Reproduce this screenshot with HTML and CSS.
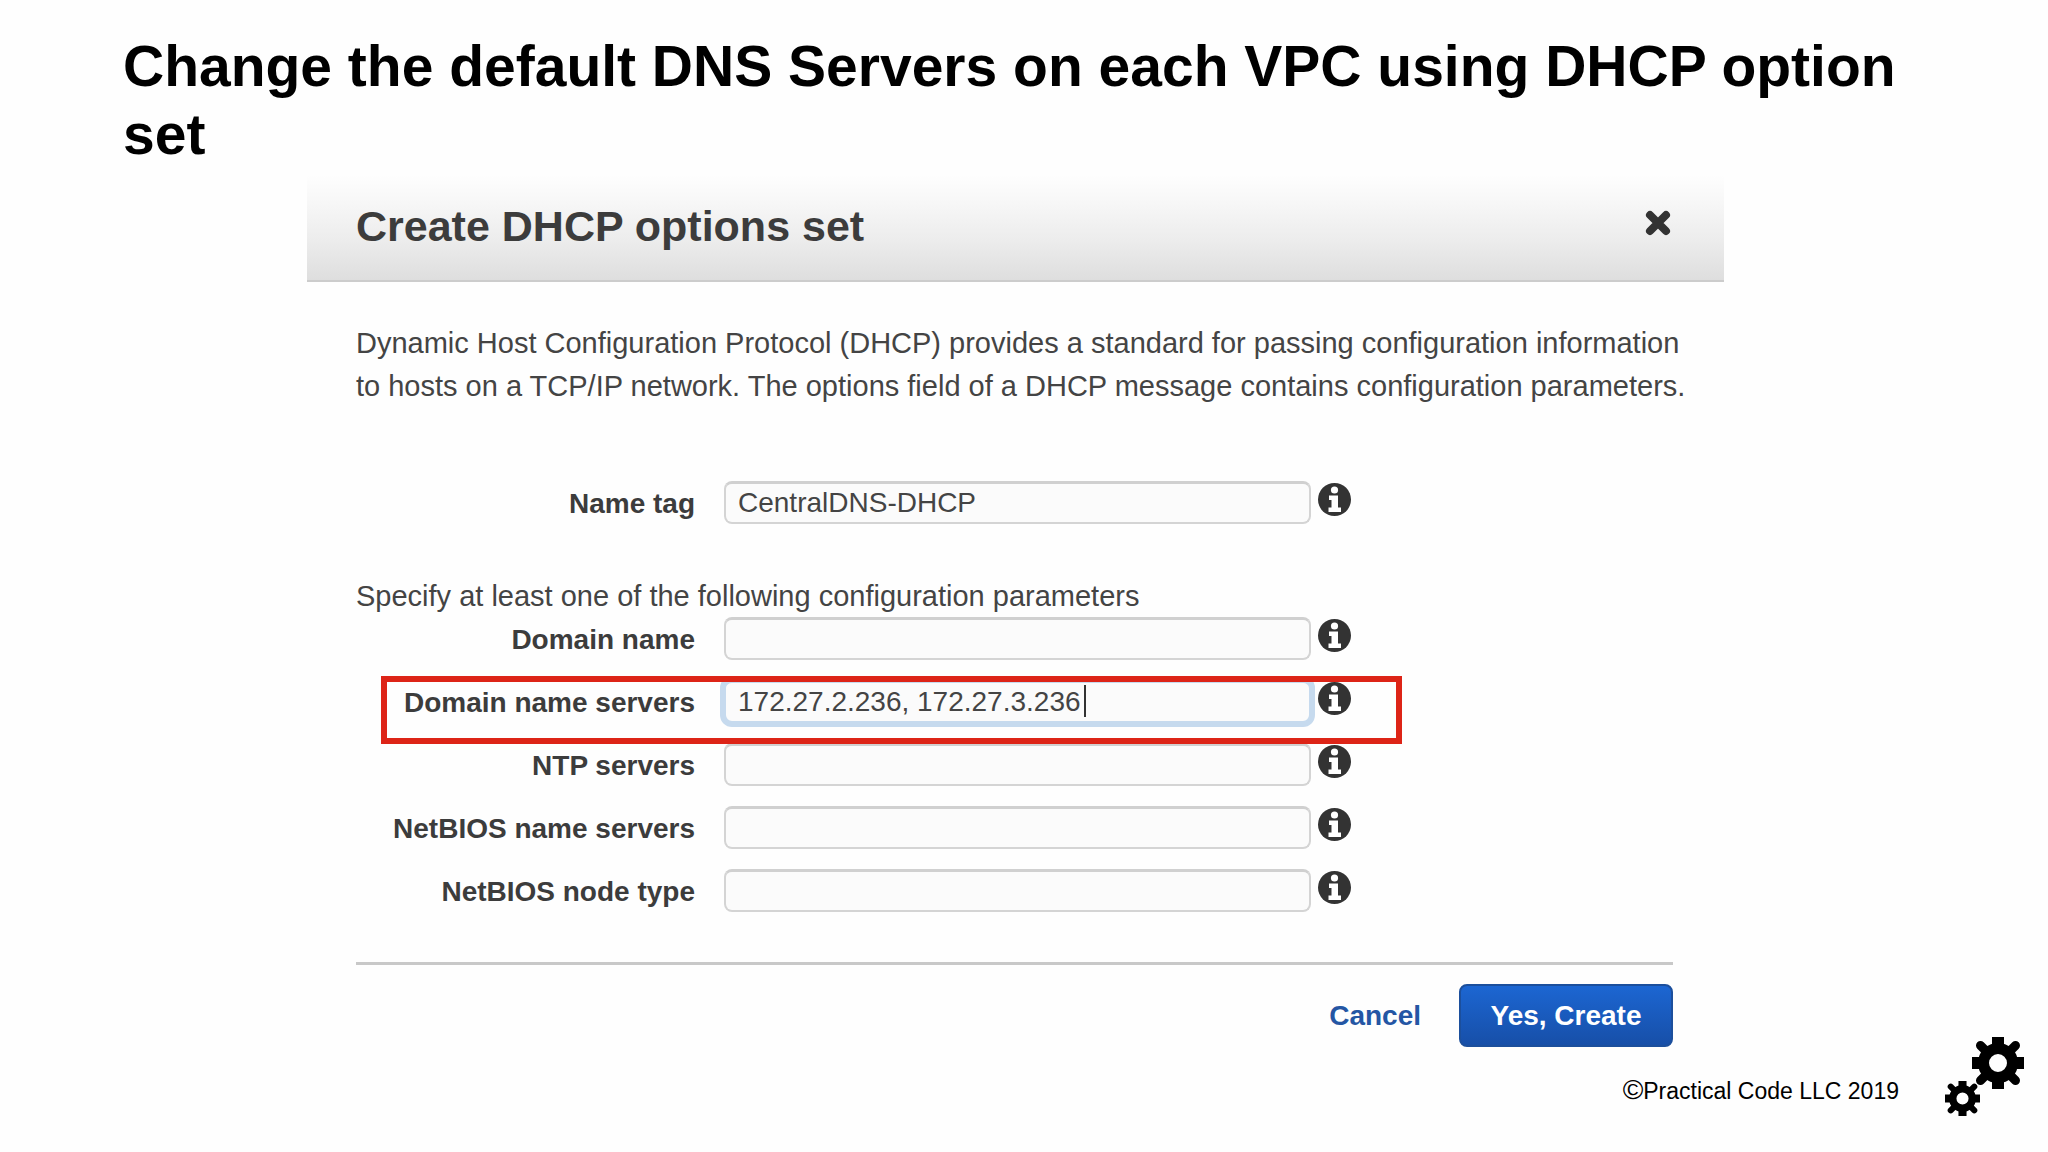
FILE: index.html
```html
<!DOCTYPE html>
<html lang="en">
<head>
    <meta charset="UTF-8">
    <meta name="viewport" content="width=device-width, initial-scale=1.0">
    <title>Create DHCP options set</title>
    <link rel="stylesheet" href="styles.css">
</head>
<body>
    <!-- shared icons -->
    <svg class="sprite" aria-hidden="true">
        <symbol id="info" viewBox="0 0 33 33">
            <circle cx="16.5" cy="16.5" r="16.5" fill="#333"/>
            <circle cx="16.5" cy="7" r="3.6" fill="#fff"/>
            <path d="M11 12.5h9v12h3V29H10.500v-4.500h3v-7.500H11z" fill="#fff"/>
        </symbol>
        <symbol id="gear" viewBox="-26 -26 52 52">
            <g fill="none" stroke="#000">
                <circle r="14.5" stroke-width="11"/>
                <path stroke-width="12" d="M0-16V-26M0 16V26M-16 0H-26M16 0H26"/>
                <path stroke-width="9" stroke-linecap="round" d="M12-12l5.500-5.500M12 12l5.500 5.500M-12 12l-5.500 5.500M-12-12l-5.500-5.500"/>
            </g>
        </symbol>
    </svg>

    <h1>Change the default DNS Servers on each VPC using DHCP option set</h1>

    <form class="dialog">
        <div class="dialog-header">
            <h2>Create DHCP options set</h2>
            <button type="button" class="close" aria-label="Close">
                <svg width="26" height="26" viewBox="0 0 26 26"><path d="M5 5l16 16M21 5L5 21" stroke="#333" stroke-width="8" stroke-linecap="round"/></svg>
            </button>
        </div>
        <div class="dialog-body">
            <p class="intro">Dynamic Host Configuration Protocol (DHCP) provides a standard for passing configuration information to hosts on a TCP/IP network. The options field of a DHCP message contains configuration parameters.</p>
            <div class="form-row">
                <label for="name-tag">Name tag</label>
                <input type="text" id="name-tag" value="CentralDNS-DHCP">
                <svg class="info"><use href="#info"/></svg>
            </div>
            <p class="hint">Specify at least one of the following configuration parameters</p>
            <div class="rows">
                <div class="form-row">
                    <label for="domain-name">Domain name</label>
                    <input type="text" id="domain-name">
                    <svg class="info"><use href="#info"/></svg>
                </div>
                <div class="form-row marked">
                    <label for="dns">Domain name servers</label>
                    <div class="field">
                        <input type="text" id="dns" class="active" value="172.27.2.236, 172.27.3.236">
                        <span class="caret"></span>
                    </div>
                    <svg class="info"><use href="#info"/></svg>
                </div>
                <div class="form-row">
                    <label for="ntp">NTP servers</label>
                    <input type="text" id="ntp">
                    <svg class="info"><use href="#info"/></svg>
                </div>
                <div class="form-row">
                    <label for="netbios-name">NetBIOS name servers</label>
                    <input type="text" id="netbios-name">
                    <svg class="info"><use href="#info"/></svg>
                </div>
                <div class="form-row">
                    <label for="netbios-type">NetBIOS node type</label>
                    <input type="text" id="netbios-type">
                    <svg class="info"><use href="#info"/></svg>
                </div>
            </div>
            <div class="actions">
                <button type="button" class="cancel">Cancel</button>
                <button type="submit" class="create">Yes, Create</button>
            </div>
        </div>
    </form>

    <footer>
        <span><span class="copy">©</span>Practical Code LLC 2019</span>
        <div class="gears">
            <svg class="gear-small"><use href="#gear"/></svg>
            <svg class="gear-big"><use href="#gear"/></svg>
        </div>
    </footer>
</body>
</html>
```
FILE: styles.css
```css
*,
*::after {
    box-sizing: border-box;
}

body {
    margin: 0;
    background-color: #fefefe;
    color: #000;
    font-family: "Liberation Sans", Arial, sans-serif;
}

h1, h2, p {
    margin: 0;
}

.sprite {
    position: absolute;
    width: 0;
    height: 0;
}

h1 {
    padding: 32px 123px 0;
    font-size: 57px;
    line-height: 68px;
}

/* dialog */
.dialog {
    margin: 0 324px 0 307px;
    color: #444;
    font-size: 28px;
}

.dialog-header {
    display: flex;
    justify-content: space-between;
    align-items: flex-start;
    height: 114px;
    padding: 36px 53px 0 49px;
    background: linear-gradient(#fefefe 6%, #f6f6f6 34%, #ececec 65%, #dedede);
    border-bottom: 2px solid #ccc;
}

h2 {
    color: #3c3c3c;
    font-size: 43px;
    line-height: 44px;
}

.close {
    padding: 6px 0;
    border: none;
    background: none;
    cursor: pointer;
}

.close svg {
    display: block;
}

.dialog-body {
    padding: 40px 51px 0 49px;
}

.intro,
.hint {
    font-size: 29px;
}

.intro {
    margin-right: -24px;
    line-height: 43px;
}

.intro + .form-row {
    margin-top: 73px;
}

.hint {
    margin-top: 56px;
    line-height: 32px;
}

/* form rows */
.rows {
    display: flex;
    flex-direction: column;
    gap: 20px;
    margin-top: 5px;
}

.form-row {
    display: grid;
    grid-template-columns: 339px 587px 33px;
    column-gap: 29px;
    align-items: start;
}

label {
    color: #3c3c3c;
    font-weight: bold;
    line-height: 45px;
    height: 43px;
    text-align: right;
    white-space: nowrap;
}

input[type="text"] {
    display: block;
    width: 100%;
    height: 43px;
    padding: 0 12px;
    border: 2px solid #d4d4d4;
    border-top: 3px solid #d0d0d0;
    border-radius: 8px;
    outline: none;
    background-color: #fbfbfb;
    color: #444;
    font-family: inherit;
    font-size: 28px;
}

input.active {
    border-color: #c6daee;
    box-shadow: 0 0 0 4px #c6daee;
}

.info {
    width: 33px;
    height: 37px;
    margin-left: -22px;
}

.field {
    position: relative;
}

.caret {
    position: absolute;
    top: 5px;
    left: 360px;
    width: 2px;
    height: 32px;
    background-color: #333;
}

/* red marker around the row */
.marked {
    position: relative;
}

.marked::after {
    content: "";
    position: absolute;
    top: -4px;
    left: 25px;
    z-index: 1;
    width: 1021px;
    height: 68px;
    border: 6px solid #dd2417;
}

/* buttons */
.actions {
    display: flex;
    justify-content: flex-end;
    align-items: center;
    gap: 38px;
    margin-top: 50px;
    padding-top: 19px;
    border-top: 3px solid #c8c8c8;
}

.cancel,
.create {
    border: none;
    font-family: inherit;
    font-size: 28px;
    font-weight: bold;
    cursor: pointer;
}

.cancel {
    padding: 0;
    background: none;
    color: #2456a4;
}

.create {
    width: 214px;
    height: 63px;
    border: 2px solid #1c4f9c;
    border-radius: 8px;
    background: linear-gradient(#1c66d2, #174fa8);
    color: #fff;
}

/* slide footer */
footer {
    display: flex;
    justify-content: flex-end;
    align-items: center;
    gap: 46px;
    margin-top: -10px;
    padding-right: 24px;
    font-size: 23px;
    line-height: 32px;
}

footer > span {
    padding-top: 28px;
}

.copy {
    font-size: 28px;
}

.gears {
    position: relative;
    width: 79px;
    height: 79px;
}

.gear-big,
.gear-small {
    position: absolute;
}

.gear-big {
    top: 0;
    right: 0;
    width: 52px;
    height: 52px;
}

.gear-small {
    bottom: 0;
    left: 0;
    width: 35px;
    height: 35px;
}
```
